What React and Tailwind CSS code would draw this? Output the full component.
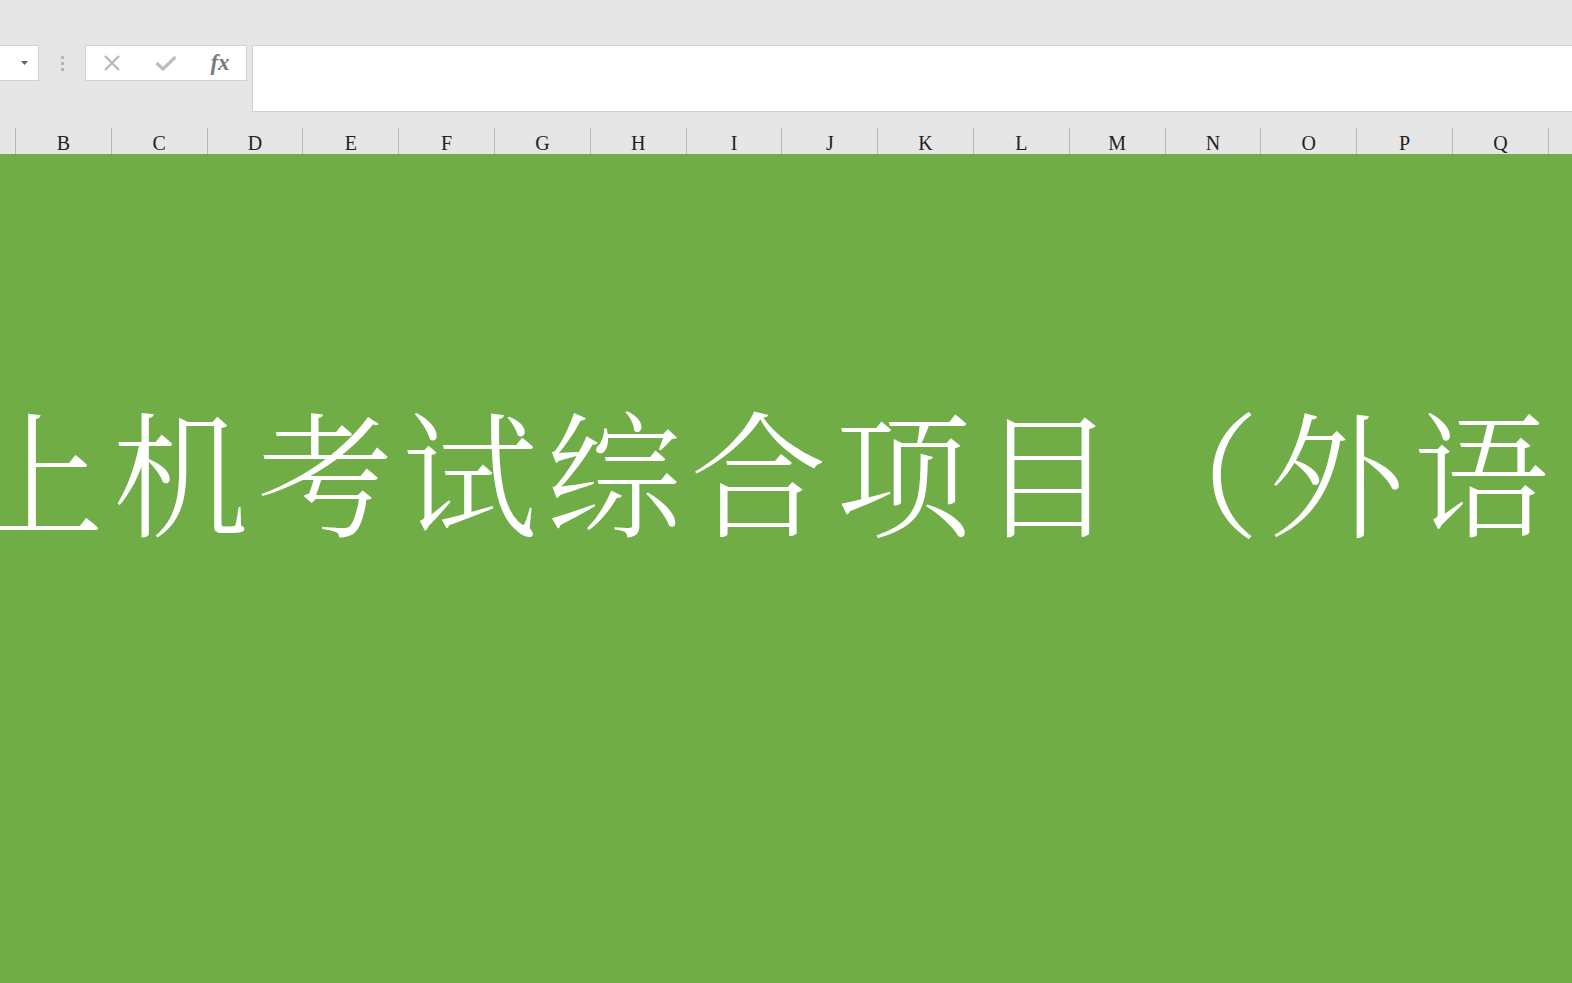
import React from "react";

const cols = ["B","C","D","E","F","G","H","I","J","K","L","M","N","O","P","Q"];

export default function App() {
  return (
    <div className="w-[1572px] h-[983px] overflow-hidden bg-[#e6e6e6] flex flex-col" style={{fontFamily: '"Liberation Serif", serif'}}>
      {/* formula bar area */}
      <div className="h-[127px] flex items-start pt-[45px]">
        <div className="w-[39px] h-[36px] bg-white border border-l-0 border-[#d2d2d2] flex items-center justify-end pr-[10px]">
          <svg width="7" height="4" viewBox="0 0 7 4"><path d="M0 0 L7 0 L3.5 4 Z" fill="#666" /></svg>
        </div>
        <div className="w-[46px] h-[36px] flex flex-col items-center justify-center gap-[3px]">
          <div className="w-[3px] h-[3px] bg-[#b5b5b5]" />
          <div className="w-[3px] h-[3px] bg-[#b5b5b5]" />
          <div className="w-[3px] h-[3px] bg-[#b5b5b5]" />
        </div>
        <div className="w-[162px] h-[36px] bg-white border border-[#d2d2d2] flex items-center">
          <div className="w-[52px] flex justify-center">
            <svg width="18" height="18" viewBox="0 0 18 18"><path d="M2 2 L16 16 M16 2 L2 16" stroke="#b8b8b8" strokeWidth="2.2" /></svg>
          </div>
          <div className="w-[56px] flex justify-center">
            <svg width="22" height="16" viewBox="0 0 22 16"><path d="M1.5 8 L8 14 L20.5 2" stroke="#bdbdbd" strokeWidth="3.2" fill="none" /></svg>
          </div>
          <div className="w-[52px] flex justify-center text-[#7a7a7a] italic font-bold text-[23px] leading-none pb-[2px]" style={{fontFamily: '"Liberation Serif", serif'}}>
            fx
          </div>
        </div>
        <div className="w-[5px]" />
        <div className="flex-1 h-[67px] bg-white border-y border-l border-[#d2d2d2]" />
      </div>
      {/* column header */}
      <div className="h-[27px] flex items-stretch bg-[#e6e6e6]">
        <div className="w-[16px] shrink-0 border-r border-[#b8b8b8] mt-[1px]" />
        {cols.map((c) => (
          <div key={c} className="w-[95.8px] shrink-0 border-r border-[#b8b8b8] mt-[1px] flex items-end justify-center text-[20px] leading-[22px] text-[#222]">
            {c}
          </div>
        ))}
        <div className="flex-1" />
      </div>
      {/* green area */}
      <div className="flex-1 bg-[#70ad47] relative overflow-hidden">
        <div className="mt-[239px] ml-[-32px] whitespace-nowrap text-white text-[136px] leading-[150px] tracking-[8.5px] font-light" style={{fontFamily: '"Noto Serif CJK SC", "Noto Sans CJK SC", serif'}}>
          上机考试综合项目（外语
        </div>
      </div>
    </div>
  );
}
